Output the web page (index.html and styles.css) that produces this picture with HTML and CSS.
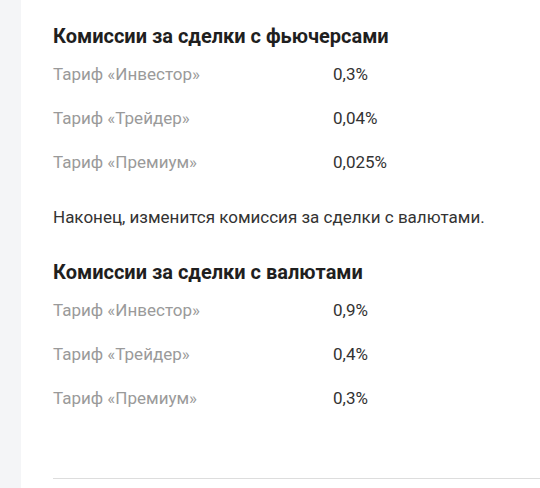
FILE: index.html
```html
<!DOCTYPE html>
<html lang="ru">
<head>
<meta charset="utf-8">
<link rel="stylesheet" href="styles.css">
</head>
<body>
<div class="page">
  <aside class="side"></aside>
  <main class="content">
    <h3 class="title">Комиссии за сделки с фьючерсами</h3>
    <table class="fees">
      <tr><td class="label">Тариф «Инвестор»</td><td class="value">0,3%</td></tr>
      <tr><td class="label">Тариф «Трейдер»</td><td class="value">0,04%</td></tr>
      <tr><td class="label">Тариф «Премиум»</td><td class="value">0,025%</td></tr>
    </table>
    <p class="text">Наконец, изменится комиссия за сделки с валютами.</p>
    <h3 class="title">Комиссии за сделки с валютами</h3>
    <table class="fees">
      <tr><td class="label">Тариф «Инвестор»</td><td class="value">0,9%</td></tr>
      <tr><td class="label">Тариф «Трейдер»</td><td class="value">0,4%</td></tr>
      <tr><td class="label">Тариф «Премиум»</td><td class="value">0,3%</td></tr>
    </table>
    <hr class="divider">
  </main>
</div>
</body>
</html>
```
FILE: styles.css
```css
html, body {
  margin: 0;
  padding: 0;
  background: #fff;
}
body {
  font-family: Roboto, "Noto Sans", sans-serif;
  color: #222;
}
.page {
  display: flex;
  min-height: 488px;
}
.side {
  width: 21px;
  flex: none;
  background: #f4f5f7;
}
.content {
  flex: 1;
  padding: 24px 0 0 32px;
}
.title {
  margin: 0 0 4px;
  font-size: 20px;
  line-height: 24px;
  font-weight: 700;
  color: #1f1f1f;
}
.fees {
  border-collapse: collapse;
  font-size: 17px;
}
.fees td {
  padding: 0;
  height: 44px;
  line-height: 20px;
  vertical-align: middle;
}
.label {
  width: 280px;
  color: #9a9a9a;
}
.value {
  color: #333;
}
.text {
  margin: 21px 0 31px;
  font-size: 17px;
  line-height: 24px;
  color: #333;
}
.divider {
  margin: 58px 0 0;
  border: 0;
  border-top: 1px solid #ddd;
  height: 0;
}
```
